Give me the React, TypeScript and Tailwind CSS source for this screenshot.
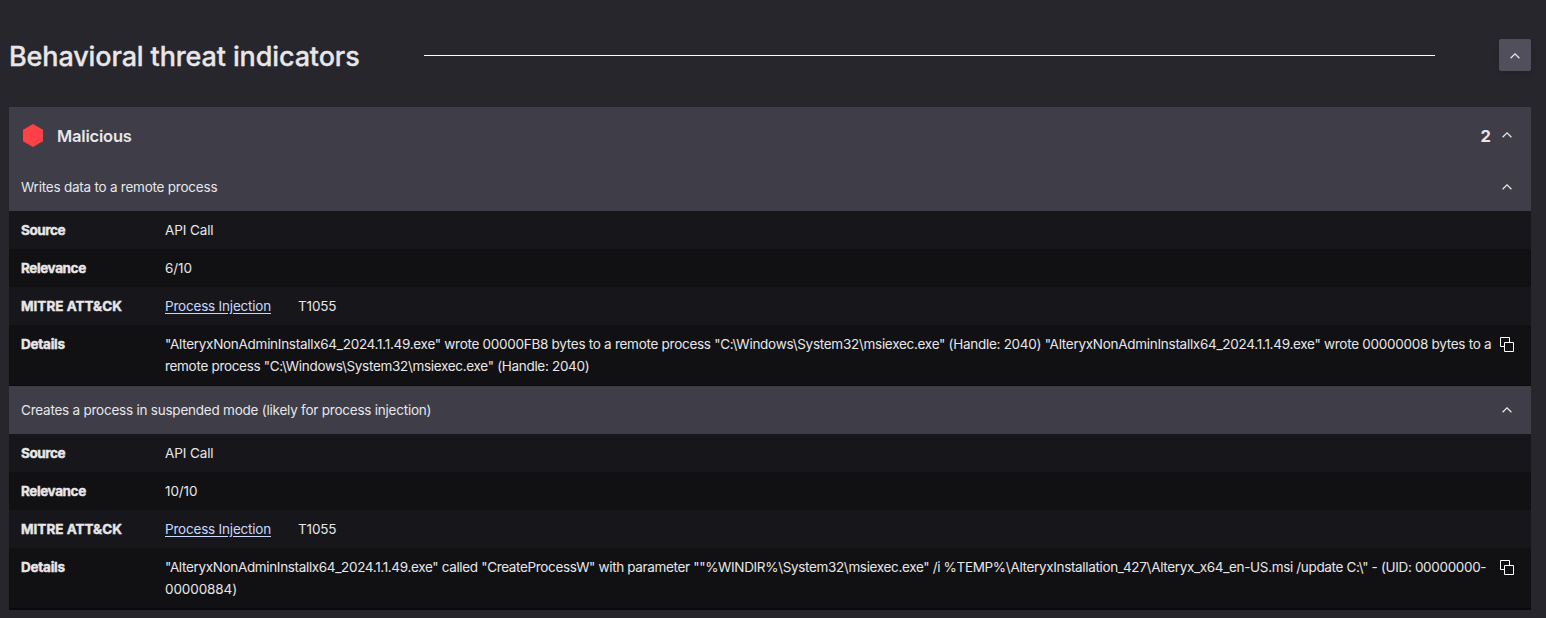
import { useState } from "react";
import clsx from "clsx";

type Line = { text: string; tracking: string };

type Indicator = {
  title: string;
  source: string;
  relevance: string;
  technique: string;
  techniqueId: string;
  details: Line[];
};

const indicators: Indicator[] = [
  {
    title: "Writes data to a remote process",
    source: "API Call",
    relevance: "6/10",
    technique: "Process Injection",
    techniqueId: "T1055",
    details: [
      {
        text: '"AlteryxNonAdminInstallx64_2024.1.1.49.exe" wrote 00000FB8 bytes to a remote process "C:\\Windows\\System32\\msiexec.exe" (Handle: 2040) "AlteryxNonAdminInstallx64_2024.1.1.49.exe" wrote 00000008 bytes to a',
        tracking: "tracking-[-0.28px]",
      },
      {
        text: 'remote process "C:\\Windows\\System32\\msiexec.exe" (Handle: 2040)',
        tracking: "tracking-[-0.31px]",
      },
    ],
  },
  {
    title: "Creates a process in suspended mode (likely for process injection)",
    source: "API Call",
    relevance: "10/10",
    technique: "Process Injection",
    techniqueId: "T1055",
    details: [
      {
        text: '"AlteryxNonAdminInstallx64_2024.1.1.49.exe" called "CreateProcessW" with parameter ""%WINDIR%\\System32\\msiexec.exe" /i %TEMP%\\AlteryxInstallation_427\\Alteryx_x64_en-US.msi /update C:\\" - (UID: 00000000-',
        tracking: "tracking-[-0.34px]",
      },
      { text: "00000884)", tracking: "tracking-[-0.1px]" },
    ],
  },
];

const Chevron = ({ open = true }: { open?: boolean }) => (
  <svg
    width="10"
    height="6"
    viewBox="0 0 10 6"
    fill="none"
    stroke="currentColor"
    strokeWidth="1.3"
    className={clsx("shrink-0", !open && "rotate-180")}
  >
    <path d="M0.6 5.3 L5 0.9 L9.4 5.3" />
  </svg>
);

const CopyIcon = () => (
  <svg width="14" height="15" viewBox="0 0 14 15" fill="none" stroke="currentColor">
    <path d="M4.5 9.5H0.5V0.5H9.5V5.5" />
    <path d="M4.5 5.5H13.5V14.5H4.5Z" />
  </svg>
);

type RowProps = {
  label: string;
  tracking: string;
  dark?: boolean;
  children: React.ReactNode;
};

const Row = ({ label, tracking, dark, children }: RowProps) => (
  <div className={clsx("flex py-2 pl-3 pr-[17px]", dark ? "bg-[#111113]" : "bg-[#17171b]")}>
    <p className={clsx("w-36 shrink-0 font-bold whitespace-nowrap [-webkit-text-stroke:0.4px]", tracking)}>
      {label}
    </p>
    {children}
  </div>
);

const IndicatorItem = ({ item }: { item: Indicator }) => {
  const [open, setOpen] = useState(true);

  return (
    <div>
      <button
        onClick={() => setOpen(!open)}
        className="flex h-12 w-full items-center justify-between bg-[#3e3d48] pl-3 pr-[19px] cursor-pointer"
      >
        <span className="tracking-[-0.23px]">{item.title}</span>
        <Chevron open={open} />
      </button>
      {open && (
        <div className="border-b border-[#0a0a0c]">
          <Row label="Source" tracking="tracking-[-0.45px]">
            <p className="tracking-[-0.1px]">{item.source}</p>
          </Row>
          <Row label="Relevance" tracking="tracking-[-0.4px]" dark>
            <p className="tracking-[-0.1px]">{item.relevance}</p>
          </Row>
          <Row label="MITRE ATT&CK" tracking="tracking-normal">
            <a href="#" className="w-[133px] tracking-[-0.2px] text-[#c9d8fb] underline underline-offset-2">
              {item.technique}
            </a>
            <p className="tracking-[-0.15px]">{item.techniqueId}</p>
          </Row>
          <Row label="Details" tracking="tracking-[-0.25px]" dark>
            <div className="min-w-0 flex-1">
              {item.details.map((line) => (
                <p key={line.text} className={clsx("whitespace-nowrap", line.tracking)}>
                  {line.text}
                </p>
              ))}
            </div>
            <button className="mt-1 h-[15px] shrink-0 text-white cursor-pointer">
              <CopyIcon />
            </button>
          </Row>
        </div>
      )}
    </div>
  );
};

export default function App() {
  return (
    <main className="h-[618px] overflow-hidden bg-[#27262c] pl-[9px] pr-[15px] font-['Inter',sans-serif] text-[13.5px] leading-[22px] text-[#e7e7ea]">
      {/* Section title */}
      <div className="flex h-[107px] items-center pt-[3px]">
        <h1 className="w-[415px] shrink-0 pt-[3px] text-[27px] font-medium tracking-[-0.13px] whitespace-nowrap [-webkit-text-stroke:0.3px]">
          Behavioral threat indicators
        </h1>
        <div className="h-px w-[1011px] bg-white" />
        <button className="ml-auto flex size-8 items-center justify-center rounded-xs bg-[#514f5b] pt-px shadow-md cursor-pointer">
          <Chevron />
        </button>
      </div>

      {/* Malicious group */}
      <section className="border-b border-[#0a0a0c]">
        <div className="flex h-14 items-center bg-[#3e3d48] pl-[14px] pr-[19px]">
          <svg width="20" height="23" viewBox="0 0 20 23" fill="#ff4046">
            <path d="M10 0L20 5.75V17.25L10 23L0 17.25V5.75Z" />
          </svg>
          <h2 className="ml-[14px] pt-0.5 text-[16.5px] font-semibold tracking-[-0.2px]">Malicious</h2>
          <span className="ml-auto mr-[11px] pt-0.5 text-[16.5px] font-bold">2</span>
          <Chevron />
        </div>
        {indicators.map((item) => (
          <IndicatorItem key={item.title} item={item} />
        ))}
      </section>
    </main>
  );
}
